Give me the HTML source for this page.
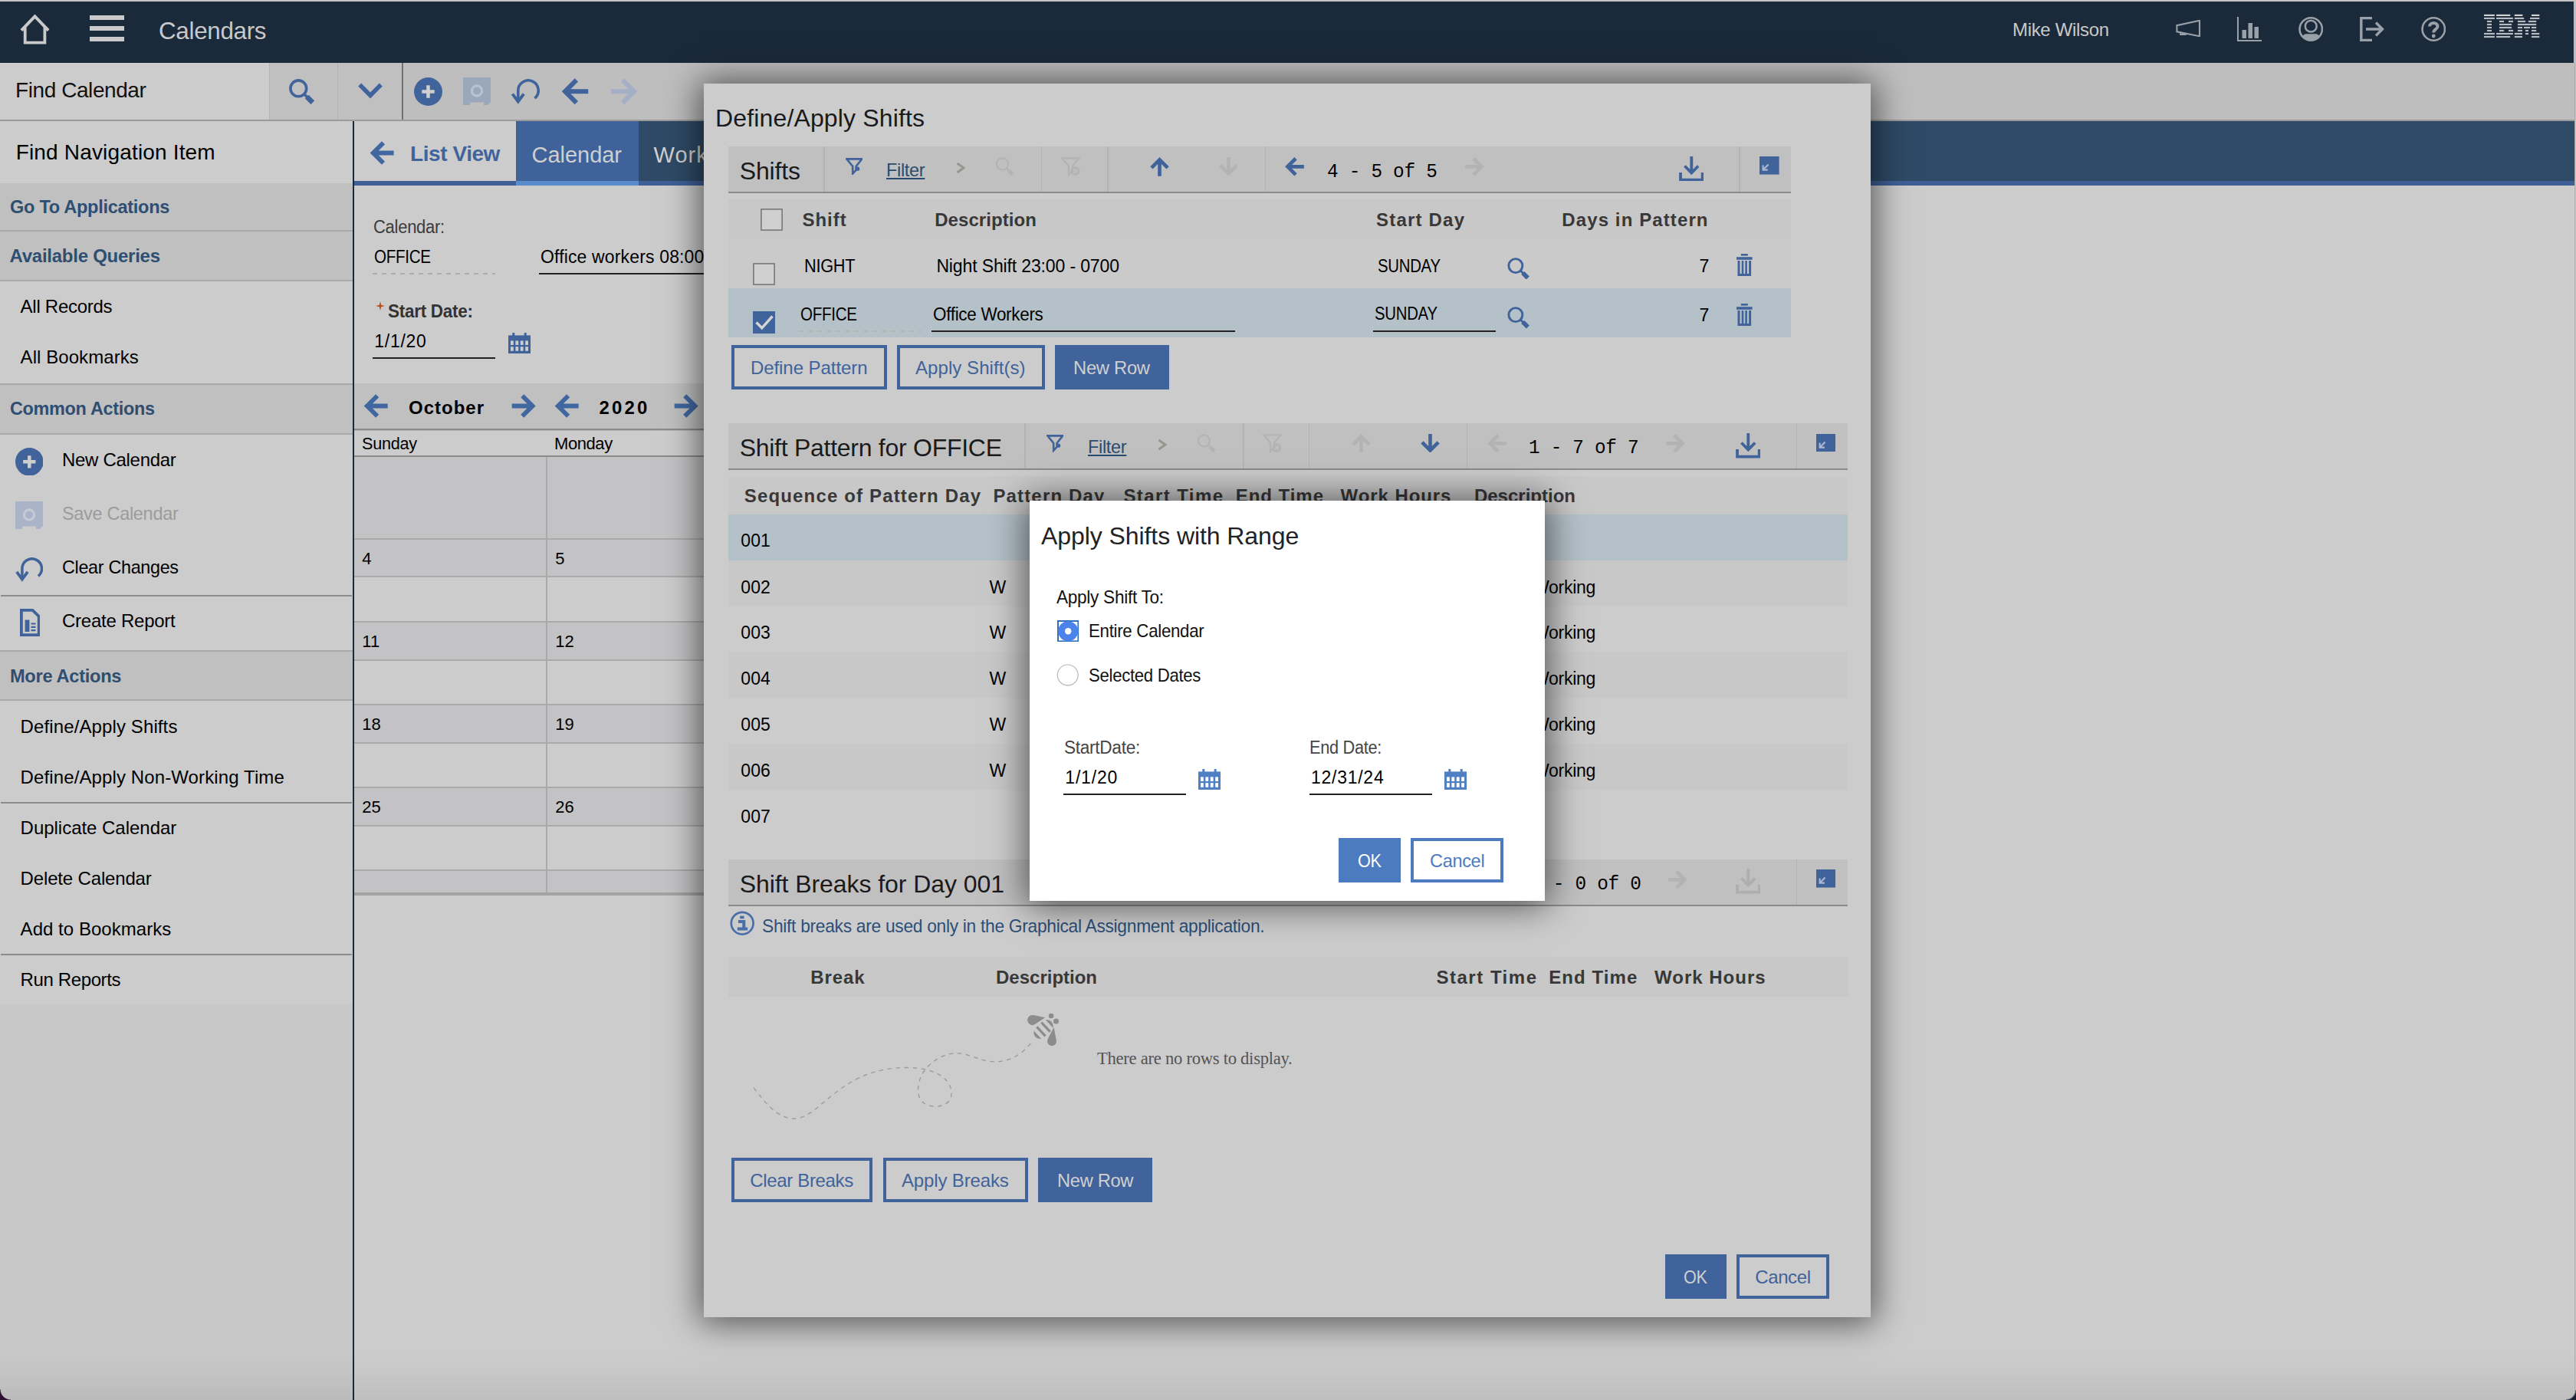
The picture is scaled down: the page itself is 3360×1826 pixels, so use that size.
<!DOCTYPE html>
<html><head><meta charset="utf-8"><title>Calendars</title><style>
html,body{margin:0;padding:0}
body{width:3360px;height:1826px;overflow:hidden;position:relative;background:#cccccc;font-family:"Liberation Sans",sans-serif}
div,span,svg{position:absolute;display:block}
span{white-space:pre}
</style></head><body>
<div style="left:0px;top:0px;width:3360px;height:2px;background:#c4c4c4;"></div>
<div style="left:0px;top:2px;width:3358px;height:80px;background:#1b2a3a;"></div>
<div style="left:3357px;top:2px;width:1px;height:1824px;background:#d4d4d4;"></div>
<div style="left:3358px;top:2px;width:2px;height:1824px;background:#c8c8c8;border-left:1px solid #a8a8a8;box-sizing:border-box"></div>
<svg style="left:25.5px;top:18px;" width="39" height="40" viewBox="0 0 39 40"><path d="M1.9 21.6 L19.5 3.4 L37.1 21.6" fill="none" stroke="#c9c9c9" stroke-width="4" stroke-linejoin="miter"/><path d="M6.7 17.5 V37.7 H32.4 V17.5" fill="none" stroke="#c9c9c9" stroke-width="3.8" stroke-linejoin="miter"/></svg>
<div style="left:117px;top:20px;width:44.5px;height:5.8px;background:#c9c9c9;"></div>
<div style="left:117px;top:34.2px;width:44.5px;height:5.8px;background:#c9c9c9;"></div>
<div style="left:117px;top:48.4px;width:44.5px;height:5.8px;background:#c9c9c9;"></div>
<span style="left:207px;top:23.91px;font-size:32px;line-height:32px;color:#c9c9c9;letter-spacing:-0.3px;transform:scaleX(0.9794);transform-origin:0 0;">Calendars</span>
<span style="left:2625px;top:26.78px;font-size:24px;line-height:24px;color:#c9c9c9;letter-spacing:-0.336px;">Mike Wilson</span>
<svg style="left:2838px;top:26px;" width="32.5" height="22" viewBox="0 0 32.5 22"><path d="M31 0.8 V21.2 L1.4 15.4 V7.2 Z" fill="none" stroke="#9aa0a8" stroke-width="2.1" stroke-linejoin="miter"/><path d="M6.2 15.5 V19 H12.6 V17" fill="none" stroke="#9aa0a8" stroke-width="2.1"/></svg>
<svg style="left:2917.5px;top:22px;" width="32.5" height="32" viewBox="0 0 32.5 32"><path d="M1 0 V31 H32.5" fill="none" stroke="#9aa0a8" stroke-width="2"/><rect x="6.5" y="17" width="5.5" height="11" fill="#9aa0a8"/><rect x="14.5" y="8" width="5.5" height="20" fill="#9aa0a8"/><rect x="22.5" y="13" width="5.5" height="15" fill="#9aa0a8"/></svg>
<svg style="left:2997.5px;top:22px;" width="32.5" height="32" viewBox="0 0 32 32"><defs><clipPath id="uc"><circle cx="16" cy="16" r="14.6"/></clipPath></defs><circle cx="16" cy="16" r="14.7" fill="none" stroke="#9aa0a8" stroke-width="2.6"/><circle cx="16" cy="12.2" r="7.4" fill="none" stroke="#9aa0a8" stroke-width="2.5"/><path d="M5 26 Q6.5 22.3 9.5 22.3 H22.5 Q25.5 22.3 27 26 V33 H5 Z" fill="#9aa0a8" clip-path="url(#uc)"/></svg>
<svg style="left:3078px;top:22px;" width="32" height="32" viewBox="0 0 32 32"><path d="M16 1.6 H1.8 V30.4 H16" fill="none" stroke="#9aa0a8" stroke-width="3.4"/><path d="M8 16 H29 M21 7.5 L29.5 16 L21 24.5" fill="none" stroke="#9aa0a8" stroke-width="3.4"/></svg>
<svg style="left:3157.5px;top:22px;" width="32.5" height="32" viewBox="0 0 32 32"><circle cx="16" cy="16" r="14.7" fill="none" stroke="#9aa0a8" stroke-width="2.6"/><path d="M10.8 12.6 C10.8 6.4 21.2 6.4 21.2 12.6 C21.2 16.4 16 16 16 20.6" fill="none" stroke="#9aa0a8" stroke-width="3.9"/><circle cx="16" cy="25" r="2.4" fill="#9aa0a8"/></svg>
<svg style="left:3230px;top:10px;" width="92" height="50" viewBox="0 0 92 50"><rect x="10.00" y="8.86" width="13.93" height="2.15" fill="#d2d2d2"/><rect x="26.07" y="8.86" width="18.21" height="2.15" fill="#d2d2d2"/><rect x="49.82" y="8.86" width="10.54" height="2.15" fill="#d2d2d2"/><rect x="71.96" y="8.86" width="10.36" height="2.15" fill="#d2d2d2"/><rect x="10.00" y="12.87" width="13.93" height="2.15" fill="#b6bbc0"/><rect x="26.07" y="12.87" width="21.79" height="2.15" fill="#b6bbc0"/><rect x="49.82" y="12.87" width="12.32" height="2.15" fill="#b6bbc0"/><rect x="70.00" y="12.87" width="12.32" height="2.15" fill="#b6bbc0"/><rect x="13.93" y="16.89" width="6.07" height="2.15" fill="#b6bbc0"/><rect x="30.00" y="16.89" width="6.07" height="2.15" fill="#b6bbc0"/><rect x="41.96" y="16.89" width="6.07" height="2.15" fill="#b6bbc0"/><rect x="53.93" y="16.89" width="10.18" height="2.15" fill="#b6bbc0"/><rect x="67.86" y="16.89" width="10.36" height="2.15" fill="#b6bbc0"/><rect x="13.93" y="20.90" width="6.07" height="2.15" fill="#b6bbc0"/><rect x="30.00" y="20.90" width="16.07" height="2.15" fill="#b6bbc0"/><rect x="53.93" y="20.90" width="24.29" height="2.15" fill="#b6bbc0"/><rect x="13.93" y="24.91" width="6.07" height="2.15" fill="#b6bbc0"/><rect x="30.00" y="24.91" width="16.07" height="2.15" fill="#b6bbc0"/><rect x="53.93" y="24.91" width="6.07" height="2.15" fill="#b6bbc0"/><rect x="61.96" y="24.91" width="8.04" height="2.15" fill="#b6bbc0"/><rect x="71.96" y="24.91" width="6.25" height="2.15" fill="#b6bbc0"/><rect x="13.93" y="28.93" width="6.07" height="2.15" fill="#b6bbc0"/><rect x="30.00" y="28.93" width="6.07" height="2.15" fill="#b6bbc0"/><rect x="41.96" y="28.93" width="6.07" height="2.15" fill="#b6bbc0"/><rect x="53.93" y="28.93" width="6.07" height="2.15" fill="#b6bbc0"/><rect x="63.93" y="28.93" width="4.11" height="2.15" fill="#b6bbc0"/><rect x="71.96" y="28.93" width="6.25" height="2.15" fill="#b6bbc0"/><rect x="10.00" y="32.94" width="13.93" height="2.15" fill="#b6bbc0"/><rect x="26.07" y="32.94" width="21.79" height="2.15" fill="#b6bbc0"/><rect x="49.82" y="32.94" width="10.18" height="2.15" fill="#b6bbc0"/><rect x="63.93" y="32.94" width="4.11" height="2.15" fill="#b6bbc0"/><rect x="71.96" y="32.94" width="10.36" height="2.15" fill="#b6bbc0"/><rect x="10.00" y="36.96" width="13.93" height="2.15" fill="#b6bbc0"/><rect x="26.07" y="36.96" width="18.04" height="2.15" fill="#b6bbc0"/><rect x="49.82" y="36.96" width="10.18" height="2.15" fill="#b6bbc0"/><rect x="71.96" y="36.96" width="10.36" height="2.15" fill="#b6bbc0"/></svg>
<div style="left:0px;top:82px;width:3358px;height:73.5px;background:#bebebe;"></div>
<div style="left:0px;top:82px;width:351px;height:73.5px;background:#cccccc;"></div>
<div style="left:351px;top:82px;width:173.5px;height:73.5px;background:#c0c0c0;border-left:1px solid #b3b3b3;box-sizing:border-box"></div>
<div style="left:440px;top:82px;width:1px;height:73.5px;background:#b3b3b3;"></div>
<div style="left:524px;top:82px;width:2px;height:73.5px;background:#707070;"></div>
<div style="left:0px;top:155.5px;width:3358px;height:2px;background:#9b9b9b;"></div>
<span style="left:20px;top:104.29px;font-size:28px;line-height:28px;color:#111;letter-spacing:-0.423px;">Find Calendar</span>
<svg style="left:376.5px;top:102.5px;" width="33" height="33" viewBox="0 0 33 33"><circle cx="12.3" cy="12.3" r="10.4" fill="none" stroke="#40639b" stroke-width="3.6"/><path d="M20 20 L24 24" stroke="#40639b" stroke-width="3.6"/><path d="M23.2 23.2 L30.8 30.8" stroke="#40639b" stroke-width="6.6"/></svg>
<svg style="left:466.5px;top:108px;" width="32" height="21" viewBox="0 0 32 21"><path d="M2.2 2.5 L16 16.5 L29.8 2.5" fill="none" stroke="#40639b" stroke-width="5.6"/></svg>
<svg style="left:539.5px;top:101px;" width="37" height="37" viewBox="0 0 36 36"><circle cx="18" cy="18" r="18" fill="#40639b"/><path d="M10 18 H26 M18 10 V26" stroke="#cfcfcf" stroke-width="4.4"/></svg>
<svg style="left:604px;top:101px;" width="36" height="36" viewBox="0 0 36 36"><path d="M0 0 H36 V32 L32 36 H27 V32.5 H9 V36 H0 Z" fill="#9ba8bc"/><circle cx="18" cy="17.5" r="6.6" fill="none" stroke="#b9c2cf" stroke-width="3.2"/></svg>
<svg style="left:667px;top:103px;" width="37" height="33" viewBox="0 0 37 33"><path d="M8.8 27 V15 A13.2 13.2 0 1 1 30.5 25.2" fill="none" stroke="#40639b" stroke-width="3.6"/><path d="M1.5 19.5 L8.8 29.5 L16.2 19.5" fill="none" stroke="#40639b" stroke-width="3.8"/></svg>
<svg style="left:732px;top:102px;" width="36" height="34.5" viewBox="0 0 34 34"><g transform="rotate(0 17 17)"><path d="M34 17 H5.24 M18.84 2.4 L4.24 17 L18.84 31.6" fill="none" stroke="#40639b" stroke-width="6" stroke-linejoin="miter"/></g></svg>
<svg style="left:796px;top:102px;" width="36" height="34.5" viewBox="0 0 34 34"><g transform="rotate(180 17 17)"><path d="M34 17 H5.24 M18.84 2.4 L4.24 17 L18.84 31.6" fill="none" stroke="#a5b0c6" stroke-width="6" stroke-linejoin="miter"/></g></svg>
<div style="left:0px;top:157.5px;width:460px;height:1152px;background:#cccccc;"></div>
<div style="left:0px;top:1309.5px;width:460px;height:517px;background:#c8c8c8;"></div>
<span style="left:20.7px;top:184.79px;font-size:28px;line-height:28px;color:#000;letter-spacing:0.169px;">Find Navigation Item</span>
<div style="left:0px;top:236.5px;width:460px;height:65.5px;background:#c0c0c0;border-top:2px solid #a9a9a9;border-bottom:2px solid #a9a9a9;box-sizing:border-box"></div>
<span style="left:12.6px;top:258.18px;font-size:24px;line-height:24px;color:#2e4e72;font-weight:700;letter-spacing:-0.3px;transform:scaleX(0.9820);transform-origin:0 0;">Go To Applications</span>
<div style="left:0px;top:300px;width:460px;height:67px;background:#c0c0c0;border-top:2px solid #a9a9a9;border-bottom:2px solid #a9a9a9;box-sizing:border-box"></div>
<span style="left:12.6px;top:321.68px;font-size:24px;line-height:24px;color:#2e4e72;font-weight:700;letter-spacing:-0.259px;">Available Queries</span>
<div style="left:0px;top:499.5px;width:460px;height:67px;background:#c0c0c0;border-top:2px solid #a9a9a9;border-bottom:2px solid #a9a9a9;box-sizing:border-box"></div>
<span style="left:12.6px;top:521.18px;font-size:24px;line-height:24px;color:#2e4e72;font-weight:700;letter-spacing:-0.3px;transform:scaleX(0.9748);transform-origin:0 0;">Common Actions</span>
<div style="left:0px;top:848px;width:460px;height:66px;background:#c0c0c0;border-top:2px solid #a9a9a9;border-bottom:2px solid #a9a9a9;box-sizing:border-box"></div>
<span style="left:12.6px;top:869.68px;font-size:24px;line-height:24px;color:#2e4e72;font-weight:700;letter-spacing:-0.3px;transform:scaleX(0.9836);transform-origin:0 0;">More Actions</span>
<div style="left:0px;top:236.5px;width:460px;height:2px;background:#cccccc;"></div>
<span style="left:26.6px;top:387.78px;font-size:24px;line-height:24px;color:#000;letter-spacing:-0.272px;">All Records</span>
<span style="left:26.6px;top:454.18px;font-size:24px;line-height:24px;color:#000;letter-spacing:0.069px;">All Bookmarks</span>
<span style="left:26.6px;top:935.68px;font-size:24px;line-height:24px;color:#000;letter-spacing:0.112px;">Define/Apply Shifts</span>
<span style="left:26.6px;top:1002.18px;font-size:24px;line-height:24px;color:#000;letter-spacing:0.113px;">Define/Apply Non-Working Time</span>
<span style="left:26.6px;top:1068.18px;font-size:24px;line-height:24px;color:#000;letter-spacing:-0.025px;">Duplicate Calendar</span>
<span style="left:26.6px;top:1133.58px;font-size:24px;line-height:24px;color:#000;letter-spacing:-0.160px;">Delete Calendar</span>
<span style="left:26.6px;top:1199.98px;font-size:24px;line-height:24px;color:#000;letter-spacing:0.040px;">Add to Bookmarks</span>
<span style="left:26.6px;top:1265.78px;font-size:24px;line-height:24px;color:#000;letter-spacing:-0.383px;">Run Reports</span>
<span style="left:81px;top:588.18px;font-size:24px;line-height:24px;color:#000;letter-spacing:-0.298px;">New Calendar</span>
<span style="left:81px;top:657.78px;font-size:24px;line-height:24px;color:#9c9c9c;letter-spacing:-0.3px;transform:scaleX(0.9777);transform-origin:0 0;">Save Calendar</span>
<span style="left:81px;top:727.58px;font-size:24px;line-height:24px;color:#000;letter-spacing:-0.3px;transform:scaleX(0.9713);transform-origin:0 0;">Clear Changes</span>
<span style="left:81px;top:797.68px;font-size:24px;line-height:24px;color:#000;letter-spacing:-0.246px;">Create Report</span>
<div style="left:1px;top:776px;width:458px;height:2px;background:#8c8c8c;"></div>
<div style="left:1px;top:1045.7px;width:458px;height:2px;background:#8c8c8c;"></div>
<div style="left:1px;top:1243.6px;width:458px;height:2px;background:#8c8c8c;"></div>
<svg style="left:19.6px;top:583.5px;" width="36.6" height="36.6" viewBox="0 0 36 36"><circle cx="18" cy="18" r="18" fill="#40639b"/><path d="M10 18 H26 M18 10 V26" stroke="#cfcfcf" stroke-width="4.4"/></svg>
<svg style="left:20px;top:654px;" width="36" height="36" viewBox="0 0 36 36"><path d="M0 0 H36 V32 L32 36 H27 V32.5 H9 V36 H0 Z" fill="#a9b4c8"/><circle cx="18" cy="17.5" r="6.6" fill="none" stroke="#c4cad4" stroke-width="3.2"/></svg>
<svg style="left:19.6px;top:726.5px;" width="36.6" height="32" viewBox="0 0 37 33"><path d="M8.8 27 V15 A13.2 13.2 0 1 1 30.5 25.2" fill="none" stroke="#40639b" stroke-width="3.6"/><path d="M1.5 19.5 L8.8 29.5 L16.2 19.5" fill="none" stroke="#40639b" stroke-width="3.8"/></svg>
<svg style="left:25.7px;top:794px;" width="26.6" height="36" viewBox="0 0 26.6 36"><path d="M1.9 1.9 H16.5 L24.7 10 V34.1 H1.9 Z" fill="none" stroke="#40639b" stroke-width="3.8"/><path d="M15 0 L26.6 11.6 V0 Z" fill="#40639b" opacity="0"/><rect x="6.6" y="14.5" width="5.8" height="15.5" fill="#40639b"/><path d="M14.5 19.5 H20.5 M14.5 23.8 H20.5 M14.5 28.1 H20.5" stroke="#40639b" stroke-width="2.2"/></svg>
<div style="left:460px;top:157.5px;width:2px;height:1670px;background:#1b2a3a;"></div>
<div style="left:462px;top:157.5px;width:2896px;height:78.5px;background:#2f4a66;"></div>
<div style="left:462px;top:236px;width:2896px;height:6px;background:#3f6097;"></div>
<div style="left:462px;top:157.5px;width:211px;height:78.5px;background:#cccccc;"></div>
<div style="left:673px;top:157.5px;width:160px;height:78.5px;background:#40629a;"></div>
<div style="left:673px;top:236px;width:160px;height:6px;background:#5a8ccb;"></div>
<svg style="left:481.8px;top:184.4px;" width="32.2" height="31" viewBox="0 0 34 34"><g transform="rotate(0 17 17)"><path d="M34 17 H5.53 M19.13 2.4 L4.53 17 L19.13 31.6" fill="none" stroke="#4167a0" stroke-width="6.4" stroke-linejoin="miter"/></g></svg>
<span style="left:535px;top:186.79px;font-size:28px;line-height:28px;color:#3f649d;font-weight:700;letter-spacing:-0.432px;">List View</span>
<span style="left:693.5px;top:188.45px;font-size:29px;line-height:29px;color:#cfcfcf;letter-spacing:-0.027px;">Calendar</span>
<span style="left:852.6px;top:188.45px;font-size:29px;line-height:29px;color:#cfcfcf;letter-spacing:1.000px;">Work Periods</span>
<span style="left:486.6px;top:284.63px;font-size:23px;line-height:23px;color:#3c3c3c;letter-spacing:-0.3px;transform:scaleX(0.9575);transform-origin:0 0;">Calendar:</span>
<span style="left:488.3px;top:323.83px;font-size:23px;line-height:23px;color:#000;letter-spacing:-0.3px;transform:scaleX(0.8945);transform-origin:0 0;">OFFICE</span>
<div style="left:486px;top:356px;width:160px;height:2px;background:transparent;background:repeating-linear-gradient(90deg,#adadad 0 6px,transparent 6px 12px)"></div>
<span style="left:705px;top:323.83px;font-size:23px;line-height:23px;color:#000;letter-spacing:0.150px;">Office workers 08:00 - 17:00</span>
<div style="left:703px;top:356px;width:500px;height:2px;background:#222;"></div>
<svg style="left:489.5px;top:392.5px;" width="12" height="12" viewBox="0 0 12 12"><path d="M6 0 L7.2 4.8 L12 6 L7.2 7.2 L6 12 L4.8 7.2 L0 6 L4.8 4.8 Z" fill="#b5501e"/></svg>
<span style="left:505.8px;top:394.63px;font-size:23px;line-height:23px;color:#333;font-weight:700;letter-spacing:-0.3px;transform:scaleX(0.9796);transform-origin:0 0;">Start Date:</span>
<span style="left:488.3px;top:434.03px;font-size:23px;line-height:23px;color:#000;letter-spacing:0.729px;">1/1/20</span>
<div style="left:486px;top:465.5px;width:160px;height:2px;background:#222;"></div>
<svg style="left:662.6px;top:433.5px;" width="29" height="27" viewBox="0 0 29 27"><rect x="0" y="3.4" width="29" height="23.6" fill="#40639b"/><rect x="5.3" y="0" width="3" height="6" fill="#40639b"/><rect x="20.7" y="0" width="3" height="6" fill="#40639b"/><rect x="3.0" y="10.4" width="3.8" height="5.6" fill="#cccccc"/><rect x="3.0" y="18.2" width="3.8" height="5.6" fill="#cccccc"/><rect x="9.4" y="10.4" width="3.8" height="5.6" fill="#cccccc"/><rect x="9.4" y="18.2" width="3.8" height="5.6" fill="#cccccc"/><rect x="15.8" y="10.4" width="3.8" height="5.6" fill="#cccccc"/><rect x="15.8" y="18.2" width="3.8" height="5.6" fill="#cccccc"/><rect x="22.2" y="10.4" width="3.8" height="5.6" fill="#cccccc"/><rect x="22.2" y="18.2" width="3.8" height="5.6" fill="#cccccc"/></svg>
<div style="left:462px;top:500px;width:1900px;height:58.5px;background:#c0c0c0;"></div>
<div style="left:462px;top:558.5px;width:1900px;height:3.5px;background:#8a8a8a;border-bottom:1px solid #b5b5b5;box-sizing:border-box"></div>
<svg style="left:474px;top:513.7px;" width="32.4" height="31" viewBox="0 0 34 34"><g transform="rotate(0 17 17)"><path d="M34 17 H5.53 M19.13 2.4 L4.53 17 L19.13 31.6" fill="none" stroke="#4167a0" stroke-width="6.4" stroke-linejoin="miter"/></g></svg>
<span style="left:533px;top:519.58px;font-size:24px;line-height:24px;color:#000;font-weight:700;letter-spacing:0.997px;">October</span>
<svg style="left:667px;top:513.7px;" width="32.4" height="31" viewBox="0 0 34 34"><g transform="rotate(180 17 17)"><path d="M34 17 H5.53 M19.13 2.4 L4.53 17 L19.13 31.6" fill="none" stroke="#4167a0" stroke-width="6.4" stroke-linejoin="miter"/></g></svg>
<svg style="left:723px;top:513.7px;" width="32.4" height="31" viewBox="0 0 34 34"><g transform="rotate(0 17 17)"><path d="M34 17 H5.53 M19.13 2.4 L4.53 17 L19.13 31.6" fill="none" stroke="#4167a0" stroke-width="6.4" stroke-linejoin="miter"/></g></svg>
<span style="left:781.4px;top:519.58px;font-size:24px;line-height:24px;color:#000;font-weight:700;letter-spacing:3.203px;">2020</span>
<svg style="left:879.4px;top:513.7px;" width="32.4" height="31" viewBox="0 0 34 34"><g transform="rotate(180 17 17)"><path d="M34 17 H5.53 M19.13 2.4 L4.53 17 L19.13 31.6" fill="none" stroke="#4167a0" stroke-width="6.4" stroke-linejoin="miter"/></g></svg>
<div style="left:462px;top:562px;width:1900px;height:32px;background:#cccccc;"></div>
<div style="left:462px;top:593.5px;width:1900px;height:2px;background:#8a8a8a;"></div>
<span style="left:472.4px;top:567.87px;font-size:22px;line-height:22px;color:#000;letter-spacing:-0.3px;transform:scaleX(0.9846);transform-origin:0 0;">Sunday</span>
<span style="left:723px;top:567.87px;font-size:22px;line-height:22px;color:#000;letter-spacing:-0.416px;">Monday</span>
<div style="left:462px;top:595.5px;width:1000px;height:107.5px;background:#c3c3c5;"></div>
<div style="left:462px;top:703px;width:1000px;height:49.4px;background:#c3c3c5;"></div>
<div style="left:462px;top:702px;width:1000px;height:2px;background:#aaaaaa;"></div>
<span style="left:472.3px;top:718.07px;font-size:22px;line-height:22px;color:#000;">4</span>
<span style="left:724.3px;top:718.07px;font-size:22px;line-height:22px;color:#000;">5</span>
<div style="left:462px;top:752.4px;width:1000px;height:58.1px;background:#cccccc;"></div>
<div style="left:462px;top:751.4px;width:1000px;height:2px;background:#aaaaaa;"></div>
<div style="left:462px;top:810.5px;width:1000px;height:50.5px;background:#c3c3c5;"></div>
<div style="left:462px;top:809.5px;width:1000px;height:2px;background:#aaaaaa;"></div>
<span style="left:472.3px;top:825.57px;font-size:22px;line-height:22px;color:#000;">11</span>
<span style="left:724.3px;top:825.57px;font-size:22px;line-height:22px;color:#000;">12</span>
<div style="left:462px;top:861px;width:1000px;height:58px;background:#cccccc;"></div>
<div style="left:462px;top:860px;width:1000px;height:2px;background:#aaaaaa;"></div>
<div style="left:462px;top:919px;width:1000px;height:50px;background:#c3c3c5;"></div>
<div style="left:462px;top:918px;width:1000px;height:2px;background:#aaaaaa;"></div>
<span style="left:472.3px;top:934.07px;font-size:22px;line-height:22px;color:#000;">18</span>
<span style="left:724.3px;top:934.07px;font-size:22px;line-height:22px;color:#000;">19</span>
<div style="left:462px;top:969px;width:1000px;height:58px;background:#cccccc;"></div>
<div style="left:462px;top:968px;width:1000px;height:2px;background:#aaaaaa;"></div>
<div style="left:462px;top:1027px;width:1000px;height:50px;background:#c3c3c5;"></div>
<div style="left:462px;top:1026px;width:1000px;height:2px;background:#aaaaaa;"></div>
<span style="left:472.3px;top:1042.07px;font-size:22px;line-height:22px;color:#000;">25</span>
<span style="left:724.3px;top:1042.07px;font-size:22px;line-height:22px;color:#000;">26</span>
<div style="left:462px;top:1077px;width:1000px;height:57.5px;background:#cccccc;"></div>
<div style="left:462px;top:1076px;width:1000px;height:2px;background:#aaaaaa;"></div>
<div style="left:462px;top:1134.5px;width:1000px;height:29.5px;background:#c3c3c5;"></div>
<div style="left:462px;top:1133.5px;width:1000px;height:2px;background:#aaaaaa;"></div>
<div style="left:712px;top:595.5px;width:2px;height:568.5px;background:#aaaaaa;"></div>
<div style="left:462px;top:1164px;width:1000px;height:4px;background:#a3a3a3;"></div>
<div style="left:918px;top:108.7px;width:1522px;height:1609px;background:#cccccc;box-shadow:0 2px 42px 5px rgba(0,0,0,0.6)"></div>
<span style="left:933px;top:138.41px;font-size:32px;line-height:32px;color:#1a1a1a;letter-spacing:0.147px;">Define/Apply Shifts</span>
<div style="left:950px;top:191px;width:1386px;height:58.5px;background:#c0c0c0;"></div>
<div style="left:950px;top:249.5px;width:1386px;height:2px;background:#8b8b8b;"></div>
<span style="left:964.7px;top:206.71px;font-size:32px;line-height:32px;color:#1a1a1a;letter-spacing:-0.146px;">Shifts</span>
<div style="left:1074px;top:191px;width:1.6px;height:58.5px;background:#b3b3b3;"></div>
<div style="left:1357.5px;top:191px;width:1.6px;height:58.5px;background:#b3b3b3;"></div>
<div style="left:1444px;top:191px;width:1.6px;height:58.5px;background:#b3b3b3;"></div>
<div style="left:1649.5px;top:191px;width:1.6px;height:58.5px;background:#b3b3b3;"></div>
<div style="left:2268px;top:191px;width:1.6px;height:58.5px;background:#b3b3b3;"></div>
<svg style="left:1102.6px;top:205.6px;" width="22.5" height="22.5" viewBox="0 0 22.5 22.5"><path d="M1.3 1.4 H21.3 L13.6 11 V15.8 L9.2 20.6 V11 Z" fill="none" stroke="#40639b" stroke-width="2.6" stroke-linejoin="miter"/><circle cx="15.6" cy="14.2" r="2.6" fill="#40639b"/></svg>
<span style="left:1156.4px;top:210.08px;font-size:24px;line-height:24px;color:#2b4b6f;letter-spacing:-0.3px;transform:scaleX(0.9760);transform-origin:0 0;text-decoration:underline;text-decoration-thickness:1.7px;text-underline-offset:1.5px">Filter</span>
<svg style="left:1247px;top:212px;" width="12" height="14" viewBox="0 0 12 14"><path d="M1.5 1 L10 7 L1.5 13" fill="none" stroke="#97978f" stroke-width="3"/></svg>
<svg style="left:1298px;top:205px;" width="25" height="24" viewBox="0 0 33 33"><circle cx="12.3" cy="12.3" r="10.4" fill="none" stroke="#b3b3b3" stroke-width="3"/><path d="M20 20 L24 24" stroke="#b3b3b3" stroke-width="3"/><path d="M23.2 23.2 L30.8 30.8" stroke="#b3b3b3" stroke-width="6.6"/></svg>
<svg style="left:1384px;top:205px;" width="25.5" height="24.5" viewBox="0 0 25.5 24.5"><path d="M1.3 1.4 H23.5 L15 11.5 V17 L10 23 V11.5 Z" fill="none" stroke="#b3b3b3" stroke-width="2.2" stroke-linejoin="miter"/><circle cx="18.5" cy="18" r="6" fill="#b3b3b3"/><path d="M16 15.5 L21 20.5 M21 15.5 L16 20.5" stroke="#c0c0c0" stroke-width="1.6"/></svg>
<svg style="left:1500.3px;top:205px;" width="25" height="24.7" viewBox="0 0 34 34"><g transform="rotate(90 17 17)"><path d="M34 17 H5.53 M19.13 2.4 L4.53 17 L19.13 31.6" fill="none" stroke="#40639b" stroke-width="6.4" stroke-linejoin="miter"/></g></svg>
<svg style="left:1590.3px;top:205px;" width="25" height="24.7" viewBox="0 0 34 34"><g transform="rotate(270 17 17)"><path d="M34 17 H5.53 M19.13 2.4 L4.53 17 L19.13 31.6" fill="none" stroke="#b3b3b3" stroke-width="6.4" stroke-linejoin="miter"/></g></svg>
<svg style="left:1676.4px;top:205px;" width="25" height="24.7" viewBox="0 0 34 34"><g transform="rotate(0 17 17)"><path d="M34 17 H5.53 M19.13 2.4 L4.53 17 L19.13 31.6" fill="none" stroke="#40639b" stroke-width="6.4" stroke-linejoin="miter"/></g></svg>
<span style="left:1730.8px;top:210.58px;font-size:26px;line-height:26px;color:#000;font-family:'Liberation Mono', monospace;letter-spacing:-0.3px;transform:scaleX(0.9378);transform-origin:0 0;">4 - 5 of 5</span>
<svg style="left:1910.6px;top:205px;" width="25" height="24.7" viewBox="0 0 34 34"><g transform="rotate(180 17 17)"><path d="M34 17 H5.53 M19.13 2.4 L4.53 17 L19.13 31.6" fill="none" stroke="#b3b3b3" stroke-width="6.4" stroke-linejoin="miter"/></g></svg>
<svg style="left:2189.8px;top:203.5px;" width="32.7" height="32.7" viewBox="0 0 32.5 32.5"><path d="M2 21 V30.5 H30.5 V21" fill="none" stroke="#40639b" stroke-width="3.8"/><path d="M16.2 0 V21 M7.4 12.4 L16.2 21.4 L25 12.4" fill="none" stroke="#40639b" stroke-width="3.8"/></svg>
<svg style="left:2295px;top:204.4px;" width="25.6" height="23.6" viewBox="0 0 25.6 23.6"><rect width="25.6" height="23.6" fill="#40639b"/><path d="M11.6 10.6 L5.4 16.8 M4.6 11.4 V17.6 H10.8" fill="none" stroke="#a9b8d0" stroke-width="2.2"/></svg>
<div style="left:950px;top:260px;width:1386px;height:52px;background:#c8c8c8;"></div>
<div style="left:950px;top:312px;width:1386px;height:64px;background:#cacaca;"></div>
<div style="left:950px;top:376px;width:1386px;height:63.7px;background:#b4c1c8;"></div>
<svg style="left:991.5px;top:271.5px;" width="29" height="29" viewBox="0 0 29 29"><rect x="0.9" y="0.9" width="27.2" height="27.2" fill="#d0d0d0" stroke="#727272" stroke-width="1.5"/></svg>
<svg style="left:981.7px;top:342.5px;" width="29" height="29" viewBox="0 0 29 29"><rect x="0.9" y="0.9" width="27.2" height="27.2" fill="#d0d0d0" stroke="#727272" stroke-width="1.5"/></svg>
<svg style="left:981.7px;top:406.3px;" width="29" height="29" viewBox="0 0 29 29"><rect width="29" height="29" fill="#40639b"/><path d="M4.5 14.5 L11.8 21.8 L25.5 6.5" fill="none" stroke="#d4d4d4" stroke-width="3.4"/></svg>
<span style="left:1046.4px;top:275.18px;font-size:24px;line-height:24px;color:#383838;font-weight:700;letter-spacing:0.993px;">Shift</span>
<span style="left:1219.2px;top:275.18px;font-size:24px;line-height:24px;color:#383838;font-weight:700;letter-spacing:0.077px;">Description</span>
<span style="left:1795px;top:275.18px;font-size:24px;line-height:24px;color:#383838;font-weight:700;letter-spacing:1.203px;">Start Day</span>
<span style="left:2037.3px;top:275.18px;font-size:24px;line-height:24px;color:#383838;font-weight:700;letter-spacing:1.105px;">Days in Pattern</span>
<span style="left:1048.8px;top:335.73px;font-size:23px;line-height:23px;color:#000;letter-spacing:-0.3px;transform:scaleX(0.9451);transform-origin:0 0;">NIGHT</span>
<span style="left:1221.4px;top:335.73px;font-size:23px;line-height:23px;color:#000;letter-spacing:-0.134px;">Night Shift 23:00 - 0700</span>
<span style="left:1796.9px;top:335.53px;font-size:23px;line-height:23px;color:#000;letter-spacing:-0.3px;transform:scaleX(0.8850);transform-origin:0 0;">SUNDAY</span>
<svg style="left:1966px;top:335.8px;" width="29" height="28.5" viewBox="0 0 33 33"><circle cx="12.3" cy="12.3" r="10.4" fill="none" stroke="#40639b" stroke-width="3.4"/><path d="M20 20 L24 24" stroke="#40639b" stroke-width="3.4"/><path d="M23.2 23.2 L30.8 30.8" stroke="#40639b" stroke-width="6.6"/></svg>
<span style="left:2216.6px;top:336.03px;font-size:23px;line-height:23px;color:#000;">7</span>
<svg style="left:2265.4px;top:331.4px;" width="20.6" height="29" viewBox="0 0 20.6 29"><rect x="5.8" y="0" width="9" height="2.6" fill="#40639b"/><rect x="0" y="4.2" width="20.6" height="3.6" fill="#40639b"/><path d="M3 9 V27.4 H17.6 V9" fill="none" stroke="#40639b" stroke-width="3"/><path d="M8 9 V27 M12.6 9 V27" stroke="#40639b" stroke-width="2.6"/></svg>
<span style="left:1044.4px;top:398.53px;font-size:23px;line-height:23px;color:#000;letter-spacing:-0.3px;transform:scaleX(0.8945);transform-origin:0 0;">OFFICE</span>
<div style="left:1042px;top:431px;width:160px;height:2px;background:transparent;background:repeating-linear-gradient(90deg,#b4b4b0 0 6px,transparent 6px 12px)"></div>
<span style="left:1217px;top:398.53px;font-size:23px;line-height:23px;color:#000;letter-spacing:-0.3px;transform:scaleX(0.9759);transform-origin:0 0;">Office Workers</span>
<div style="left:1214.8px;top:430.8px;width:396.2px;height:2.6px;background:#222;"></div>
<span style="left:1793px;top:397.83px;font-size:23px;line-height:23px;color:#000;letter-spacing:-0.3px;transform:scaleX(0.8850);transform-origin:0 0;">SUNDAY</span>
<div style="left:1791px;top:430.8px;width:160px;height:2.6px;background:#222;"></div>
<svg style="left:1966px;top:400px;" width="29" height="28.5" viewBox="0 0 33 33"><circle cx="12.3" cy="12.3" r="10.4" fill="none" stroke="#40639b" stroke-width="3.4"/><path d="M20 20 L24 24" stroke="#40639b" stroke-width="3.4"/><path d="M23.2 23.2 L30.8 30.8" stroke="#40639b" stroke-width="6.6"/></svg>
<span style="left:2216.6px;top:400.03px;font-size:23px;line-height:23px;color:#000;">7</span>
<svg style="left:2265.4px;top:395.6px;" width="20.6" height="29" viewBox="0 0 20.6 29"><rect x="5.8" y="0" width="9" height="2.6" fill="#40639b"/><rect x="0" y="4.2" width="20.6" height="3.6" fill="#40639b"/><path d="M3 9 V27.4 H17.6 V9" fill="none" stroke="#40639b" stroke-width="3"/><path d="M8 9 V27 M12.6 9 V27" stroke="#40639b" stroke-width="2.6"/></svg>
<div style="left:954px;top:450.2px;width:203px;height:57.8px;background:transparent;border:4px solid #40639b;box-sizing:border-box"></div>
<span style="left:978.9px;top:467.78px;font-size:24px;line-height:24px;color:#40639b;letter-spacing:-0.056px;">Define Pattern</span>
<div style="left:1170px;top:450.2px;width:193px;height:57.8px;background:transparent;border:4px solid #40639b;box-sizing:border-box"></div>
<span style="left:1194px;top:467.78px;font-size:24px;line-height:24px;color:#40639b;letter-spacing:0.060px;">Apply Shift(s)</span>
<div style="left:1376px;top:450.2px;width:149px;height:57.8px;background:#40639b;"></div>
<span style="left:1400px;top:467.78px;font-size:24px;line-height:24px;color:#d0d0d0;letter-spacing:-0.3px;transform:scaleX(0.9910);transform-origin:0 0;">New Row</span>
<div style="left:950px;top:552px;width:1460px;height:58.5px;background:#c0c0c0;"></div>
<div style="left:950px;top:610.5px;width:1460px;height:2px;background:#8b8b8b;"></div>
<span style="left:964.7px;top:567.71px;font-size:32px;line-height:32px;color:#1a1a1a;letter-spacing:-0.272px;">Shift Pattern for OFFICE</span>
<div style="left:1336px;top:552px;width:1.6px;height:58.5px;background:#b3b3b3;"></div>
<div style="left:1621px;top:552px;width:1.6px;height:58.5px;background:#b3b3b3;"></div>
<div style="left:1706.5px;top:552px;width:1.6px;height:58.5px;background:#b3b3b3;"></div>
<div style="left:1912.6px;top:552px;width:1.6px;height:58.5px;background:#b3b3b3;"></div>
<div style="left:2342.5px;top:552px;width:1.6px;height:58.5px;background:#b3b3b3;"></div>
<svg style="left:1364.7px;top:567px;" width="22.5" height="22.5" viewBox="0 0 22.5 22.5"><path d="M1.3 1.4 H21.3 L13.6 11 V15.8 L9.2 20.6 V11 Z" fill="none" stroke="#40639b" stroke-width="2.6" stroke-linejoin="miter"/><circle cx="15.6" cy="14.2" r="2.6" fill="#40639b"/></svg>
<span style="left:1418.5px;top:571.18px;font-size:24px;line-height:24px;color:#2b4b6f;letter-spacing:-0.3px;transform:scaleX(0.9760);transform-origin:0 0;text-decoration:underline;text-decoration-thickness:1.7px;text-underline-offset:1.5px">Filter</span>
<svg style="left:1510px;top:573px;" width="12" height="14" viewBox="0 0 12 14"><path d="M1.5 1 L10 7 L1.5 13" fill="none" stroke="#97978f" stroke-width="3"/></svg>
<svg style="left:1561px;top:566px;" width="25" height="24" viewBox="0 0 33 33"><circle cx="12.3" cy="12.3" r="10.4" fill="none" stroke="#b3b3b3" stroke-width="3"/><path d="M20 20 L24 24" stroke="#b3b3b3" stroke-width="3"/><path d="M23.2 23.2 L30.8 30.8" stroke="#b3b3b3" stroke-width="6.6"/></svg>
<svg style="left:1647px;top:566px;" width="25.5" height="24.5" viewBox="0 0 25.5 24.5"><path d="M1.3 1.4 H23.5 L15 11.5 V17 L10 23 V11.5 Z" fill="none" stroke="#b3b3b3" stroke-width="2.2" stroke-linejoin="miter"/><circle cx="18.5" cy="18" r="6" fill="#b3b3b3"/><path d="M16 15.5 L21 20.5 M21 15.5 L16 20.5" stroke="#c0c0c0" stroke-width="1.6"/></svg>
<svg style="left:1763.2px;top:565.7px;" width="25" height="24.7" viewBox="0 0 34 34"><g transform="rotate(90 17 17)"><path d="M34 17 H5.53 M19.13 2.4 L4.53 17 L19.13 31.6" fill="none" stroke="#b3b3b3" stroke-width="6.4" stroke-linejoin="miter"/></g></svg>
<svg style="left:1853px;top:565.7px;" width="25" height="24.7" viewBox="0 0 34 34"><g transform="rotate(270 17 17)"><path d="M34 17 H5.53 M19.13 2.4 L4.53 17 L19.13 31.6" fill="none" stroke="#40639b" stroke-width="6.4" stroke-linejoin="miter"/></g></svg>
<svg style="left:1939.5px;top:565.7px;" width="25" height="24.7" viewBox="0 0 34 34"><g transform="rotate(0 17 17)"><path d="M34 17 H5.53 M19.13 2.4 L4.53 17 L19.13 31.6" fill="none" stroke="#b3b3b3" stroke-width="6.4" stroke-linejoin="miter"/></g></svg>
<span style="left:1994px;top:571.08px;font-size:26px;line-height:26px;color:#000;font-family:'Liberation Mono', monospace;letter-spacing:-0.3px;transform:scaleX(0.9359);transform-origin:0 0;">1 - 7 of 7</span>
<svg style="left:2173.4px;top:565.7px;" width="25" height="24.7" viewBox="0 0 34 34"><g transform="rotate(180 17 17)"><path d="M34 17 H5.53 M19.13 2.4 L4.53 17 L19.13 31.6" fill="none" stroke="#b3b3b3" stroke-width="6.4" stroke-linejoin="miter"/></g></svg>
<svg style="left:2263.8px;top:565px;" width="32.7" height="32.7" viewBox="0 0 32.5 32.5"><path d="M2 21 V30.5 H30.5 V21" fill="none" stroke="#40639b" stroke-width="3.8"/><path d="M16.2 0 V21 M7.4 12.4 L16.2 21.4 L25 12.4" fill="none" stroke="#40639b" stroke-width="3.8"/></svg>
<svg style="left:2368.8px;top:565.7px;" width="25.6" height="23.6" viewBox="0 0 25.6 23.6"><rect width="25.6" height="23.6" fill="#40639b"/><path d="M11.6 10.6 L5.4 16.8 M4.6 11.4 V17.6 H10.8" fill="none" stroke="#a9b8d0" stroke-width="2.2"/></svg>
<div style="left:950px;top:621px;width:1460px;height:49.7px;background:#c8c8c8;"></div>
<span style="left:970.8px;top:635.18px;font-size:24px;line-height:24px;color:#383838;font-weight:700;letter-spacing:1.157px;">Sequence of Pattern Day</span>
<span style="left:1295.4px;top:635.18px;font-size:24px;line-height:24px;color:#383838;font-weight:700;letter-spacing:1.161px;">Pattern Day</span>
<span style="left:1465.4px;top:635.18px;font-size:24px;line-height:24px;color:#383838;font-weight:700;letter-spacing:1.407px;">Start Time</span>
<span style="left:1611.8px;top:635.18px;font-size:24px;line-height:24px;color:#383838;font-weight:700;letter-spacing:0.946px;">End Time</span>
<span style="left:1748.6px;top:635.18px;font-size:24px;line-height:24px;color:#383838;font-weight:700;letter-spacing:0.914px;">Work Hours</span>
<span style="left:1922.9px;top:635.18px;font-size:24px;line-height:24px;color:#383838;font-weight:700;letter-spacing:0.007px;">Description</span>
<div style="left:950px;top:670.7px;width:1460px;height:60.3px;background:#b4c1c8;"></div>
<span style="left:966.3px;top:694.43px;font-size:23px;line-height:23px;color:#000;letter-spacing:0.113px;">001</span>
<div style="left:950px;top:731px;width:1460px;height:59.7px;background:#c8c8c8;"></div>
<span style="left:966.3px;top:754.73px;font-size:23px;line-height:23px;color:#000;letter-spacing:0.113px;">002</span>
<span style="left:1290.5px;top:754.73px;font-size:23px;line-height:23px;color:#000;">W</span>
<span style="left:1999px;top:754.73px;font-size:23px;line-height:23px;color:#000;letter-spacing:-0.273px;">Working</span>
<div style="left:950px;top:790.7px;width:1460px;height:60px;background:#cccccc;"></div>
<span style="left:966.3px;top:814.43px;font-size:23px;line-height:23px;color:#000;letter-spacing:0.113px;">003</span>
<span style="left:1290.5px;top:814.43px;font-size:23px;line-height:23px;color:#000;">W</span>
<span style="left:1999px;top:814.43px;font-size:23px;line-height:23px;color:#000;letter-spacing:-0.273px;">Working</span>
<div style="left:950px;top:850.7px;width:1460px;height:60px;background:#c8c8c8;"></div>
<span style="left:966.3px;top:874.43px;font-size:23px;line-height:23px;color:#000;letter-spacing:0.113px;">004</span>
<span style="left:1290.5px;top:874.43px;font-size:23px;line-height:23px;color:#000;">W</span>
<span style="left:1999px;top:874.43px;font-size:23px;line-height:23px;color:#000;letter-spacing:-0.273px;">Working</span>
<div style="left:950px;top:910.7px;width:1460px;height:60px;background:#cccccc;"></div>
<span style="left:966.3px;top:934.43px;font-size:23px;line-height:23px;color:#000;letter-spacing:0.113px;">005</span>
<span style="left:1290.5px;top:934.43px;font-size:23px;line-height:23px;color:#000;">W</span>
<span style="left:1999px;top:934.43px;font-size:23px;line-height:23px;color:#000;letter-spacing:-0.273px;">Working</span>
<div style="left:950px;top:970.7px;width:1460px;height:60px;background:#c8c8c8;"></div>
<span style="left:966.3px;top:994.43px;font-size:23px;line-height:23px;color:#000;letter-spacing:0.113px;">006</span>
<span style="left:1290.5px;top:994.43px;font-size:23px;line-height:23px;color:#000;">W</span>
<span style="left:1999px;top:994.43px;font-size:23px;line-height:23px;color:#000;letter-spacing:-0.273px;">Working</span>
<div style="left:950px;top:1030.7px;width:1460px;height:60px;background:#cccccc;"></div>
<span style="left:966.3px;top:1054.43px;font-size:23px;line-height:23px;color:#000;letter-spacing:0.113px;">007</span>
<div style="left:950px;top:1121px;width:1460px;height:58.5px;background:#c0c0c0;"></div>
<div style="left:950px;top:1179.5px;width:1460px;height:2px;background:#8b8b8b;"></div>
<span style="left:964.7px;top:1136.71px;font-size:32px;line-height:32px;color:#1a1a1a;letter-spacing:-0.066px;">Shift Breaks for Day 001</span>
<div style="left:2342.5px;top:1121px;width:1.6px;height:58.5px;background:#b3b3b3;"></div>
<span style="left:1996.7px;top:1139.88px;font-size:26px;line-height:26px;color:#000;font-family:'Liberation Mono', monospace;letter-spacing:-0.3px;transform:scaleX(0.9391);transform-origin:0 0;">0 - 0 of 0</span>
<svg style="left:2176px;top:1134.5px;" width="25" height="24.7" viewBox="0 0 34 34"><g transform="rotate(180 17 17)"><path d="M34 17 H5.53 M19.13 2.4 L4.53 17 L19.13 31.6" fill="none" stroke="#b3b3b3" stroke-width="6.4" stroke-linejoin="miter"/></g></svg>
<svg style="left:2263.8px;top:1133.4px;" width="32.7" height="32.7" viewBox="0 0 32.5 32.5"><path d="M2 21 V30.5 H30.5 V21" fill="none" stroke="#aeaeae" stroke-width="3.8"/><path d="M16.2 0 V21 M7.4 12.4 L16.2 21.4 L25 12.4" fill="none" stroke="#aeaeae" stroke-width="3.8"/></svg>
<svg style="left:2368.8px;top:1134.2px;" width="25.6" height="23.6" viewBox="0 0 25.6 23.6"><rect width="25.6" height="23.6" fill="#40639b"/><path d="M11.6 10.6 L5.4 16.8 M4.6 11.4 V17.6 H10.8" fill="none" stroke="#a9b8d0" stroke-width="2.2"/></svg>
<svg style="left:951.9px;top:1187.5px;" width="32.4" height="32.4" viewBox="0 0 32.4 32.4"><circle cx="16.2" cy="16.2" r="14.4" fill="none" stroke="#4a6fa8" stroke-width="2.7"/><rect x="13.2" y="6.6" width="5.4" height="3.6" fill="#4a6fa8"/><path d="M11 14 H18.3 V23.6 M9.8 23.4 H23.2" fill="none" stroke="#4a6fa8" stroke-width="4"/></svg>
<span style="left:994.3px;top:1195.68px;font-size:24px;line-height:24px;color:#2d4f78;letter-spacing:-0.3px;transform:scaleX(0.9485);transform-origin:0 0;">Shift breaks are used only in the Graphical Assignment application.</span>
<div style="left:950px;top:1248px;width:1461px;height:51.8px;background:#c8c8c8;"></div>
<span style="left:1057.3px;top:1263.48px;font-size:24px;line-height:24px;color:#383838;font-weight:700;letter-spacing:0.920px;">Break</span>
<span style="left:1299px;top:1263.48px;font-size:24px;line-height:24px;color:#383838;font-weight:700;">Description</span>
<span style="left:1873.5px;top:1263.48px;font-size:24px;line-height:24px;color:#383838;font-weight:700;letter-spacing:1.507px;">Start Time</span>
<span style="left:2020.3px;top:1263.48px;font-size:24px;line-height:24px;color:#383838;font-weight:700;letter-spacing:1.060px;">End Time</span>
<span style="left:2158px;top:1263.48px;font-size:24px;line-height:24px;color:#383838;font-weight:700;letter-spacing:1.002px;">Work Hours</span>
<svg style="left:975px;top:1310px;" width="420" height="160" viewBox="0 0 420 160"><path d="M8 108.6 C24 130 40 149 61 149 C95 149 120 82.5 207 82.5 C250 82.5 266 100 266 116 C266 128 256 133 244.5 133 C230 133 222.5 124 222.5 112 C222.5 82 253 63.6 272 63.6 C290 63.6 303 74.8 322 74.8 C345 74.8 362 62 371.8 47.5" fill="none" stroke="#9a9a9a" stroke-width="1.3" stroke-dasharray="5.5 5.5"/></svg>
<svg style="left:1330px;top:1314px;" width="60" height="60" viewBox="0 0 60 60"><g fill="#8c8c8c"><path d="M33.20 13.30 L20.28 21.83 A6.5 6.5 0 1 1 18.07 10.05 Z"/><path d="M44.60 25.90 L47.89 42.96 A6.0 6.0 0 1 1 36.66 41.36 Z"/><circle cx="41.07" cy="10.95" r="3.3"/><circle cx="47.50" cy="17.90" r="3.5"/><g transform="translate(31.00 28.50) rotate(47)"><rect x="-8.3" y="-5.75" width="16.6" height="3.2" rx="0.4"/><rect x="-8.3" y="2.55" width="16.6" height="3.2" rx="0.4"/><path d="M-7 -10.45 A8.35 8.35 0 0 1 7 -10.45 Z"/><path d="M-7 10.45 A8.35 8.35 0 0 0 7 10.45 Z"/></g></g></svg>
<span style="left:1431.3px;top:1368.00px;font-size:24px;line-height:24px;color:#555;font-family:'Liberation Serif', serif;letter-spacing:-0.3px;transform:scaleX(0.9435);transform-origin:0 0;">There are no rows to display.</span>
<div style="left:954px;top:1510.2px;width:183.8px;height:57.5px;background:transparent;border:4px solid #40639b;box-sizing:border-box"></div>
<span style="left:978.2px;top:1527.98px;font-size:24px;line-height:24px;color:#40639b;letter-spacing:-0.329px;">Clear Breaks</span>
<div style="left:1152px;top:1510.2px;width:189px;height:57.5px;background:transparent;border:4px solid #40639b;box-sizing:border-box"></div>
<span style="left:1176px;top:1527.98px;font-size:24px;line-height:24px;color:#40639b;letter-spacing:-0.146px;">Apply Breaks</span>
<div style="left:1354px;top:1510.2px;width:148.7px;height:57.5px;background:#40639b;"></div>
<span style="left:1378.8px;top:1527.98px;font-size:24px;line-height:24px;color:#d0d0d0;letter-spacing:-0.3px;transform:scaleX(0.9851);transform-origin:0 0;">New Row</span>
<div style="left:2172px;top:1636px;width:80px;height:57.6px;background:#40639b;"></div>
<span style="left:2196px;top:1654.18px;font-size:24px;line-height:24px;color:#d0d0d0;letter-spacing:-0.3px;transform:scaleX(0.9015);transform-origin:0 0;">OK</span>
<div style="left:2264.8px;top:1636px;width:121.2px;height:57.6px;background:transparent;border:4px solid #40639b;box-sizing:border-box"></div>
<span style="left:2289.3px;top:1654.18px;font-size:24px;line-height:24px;color:#40639b;letter-spacing:-0.404px;">Cancel</span>
<div style="left:1343px;top:653px;width:672px;height:521.6px;background:#fff;box-shadow:0 2px 44px 4px rgba(0,0,0,0.6)"></div>
<span style="left:1358px;top:682.71px;font-size:32px;line-height:32px;color:#222;letter-spacing:-0.075px;">Apply Shifts with Range</span>
<span style="left:1377.7px;top:767.18px;font-size:24px;line-height:24px;color:#111;letter-spacing:-0.3px;transform:scaleX(0.9416);transform-origin:0 0;">Apply Shift To:</span>
<svg style="left:1378.8px;top:808.8px;" width="28.4" height="28.4" viewBox="0 0 28.4 28.4"><rect x="1" y="1" width="26.4" height="26.4" fill="#fff" stroke="#2f6fbe" stroke-width="2"/><circle cx="14.2" cy="14.2" r="13" fill="#4b83ea"/><circle cx="14.2" cy="14.2" r="4.2" fill="#fff"/></svg>
<span style="left:1419.8px;top:811.18px;font-size:24px;line-height:24px;color:#111;letter-spacing:-0.3px;transform:scaleX(0.9270);transform-origin:0 0;">Entire Calendar</span>
<svg style="left:1378.3px;top:866.2px;" width="29.4" height="30" viewBox="0 0 29.4 30"><circle cx="14.7" cy="15.2" r="13.6" fill="#d8d8d8"/><circle cx="14.7" cy="14.4" r="13.4" fill="#fff" stroke="#b9b9b9" stroke-width="1.2"/></svg>
<span style="left:1419.8px;top:868.58px;font-size:24px;line-height:24px;color:#111;letter-spacing:-0.3px;transform:scaleX(0.9215);transform-origin:0 0;">Selected Dates</span>
<span style="left:1387.5px;top:964.03px;font-size:23px;line-height:23px;color:#454545;letter-spacing:-0.3px;transform:scaleX(0.9837);transform-origin:0 0;">StartDate:</span>
<span style="left:1389.3px;top:1003.03px;font-size:23px;line-height:23px;color:#000;letter-spacing:0.809px;">1/1/20</span>
<div style="left:1387px;top:1034.8px;width:160px;height:2.6px;background:#222;"></div>
<svg style="left:1563.4px;top:1002.5px;" width="29" height="27" viewBox="0 0 29 27"><rect x="0" y="3.4" width="29" height="23.6" fill="#5080c4"/><rect x="5.3" y="0" width="3" height="6" fill="#5080c4"/><rect x="20.7" y="0" width="3" height="6" fill="#5080c4"/><rect x="3.0" y="10.4" width="3.8" height="5.6" fill="#fff"/><rect x="3.0" y="18.2" width="3.8" height="5.6" fill="#fff"/><rect x="9.4" y="10.4" width="3.8" height="5.6" fill="#fff"/><rect x="9.4" y="18.2" width="3.8" height="5.6" fill="#fff"/><rect x="15.8" y="10.4" width="3.8" height="5.6" fill="#fff"/><rect x="15.8" y="18.2" width="3.8" height="5.6" fill="#fff"/><rect x="22.2" y="10.4" width="3.8" height="5.6" fill="#fff"/><rect x="22.2" y="18.2" width="3.8" height="5.6" fill="#fff"/></svg>
<span style="left:1708.2px;top:964.03px;font-size:23px;line-height:23px;color:#454545;letter-spacing:-0.3px;transform:scaleX(0.9450);transform-origin:0 0;">End Date:</span>
<span style="left:1710px;top:1003.03px;font-size:23px;line-height:23px;color:#000;letter-spacing:0.738px;">12/31/24</span>
<div style="left:1707.8px;top:1034.8px;width:160px;height:2.6px;background:#222;"></div>
<svg style="left:1884px;top:1002.5px;" width="29" height="27" viewBox="0 0 29 27"><rect x="0" y="3.4" width="29" height="23.6" fill="#5080c4"/><rect x="5.3" y="0" width="3" height="6" fill="#5080c4"/><rect x="20.7" y="0" width="3" height="6" fill="#5080c4"/><rect x="3.0" y="10.4" width="3.8" height="5.6" fill="#fff"/><rect x="3.0" y="18.2" width="3.8" height="5.6" fill="#fff"/><rect x="9.4" y="10.4" width="3.8" height="5.6" fill="#fff"/><rect x="9.4" y="18.2" width="3.8" height="5.6" fill="#fff"/><rect x="15.8" y="10.4" width="3.8" height="5.6" fill="#fff"/><rect x="15.8" y="18.2" width="3.8" height="5.6" fill="#fff"/><rect x="22.2" y="10.4" width="3.8" height="5.6" fill="#fff"/><rect x="22.2" y="18.2" width="3.8" height="5.6" fill="#fff"/></svg>
<div style="left:1746px;top:1093px;width:80.8px;height:57.7px;background:#4c7bc0;"></div>
<span style="left:1770.5px;top:1110.58px;font-size:24px;line-height:24px;color:#fff;letter-spacing:-0.3px;transform:scaleX(0.9015);transform-origin:0 0;">OK</span>
<div style="left:1840px;top:1093px;width:120.6px;height:57.7px;background:transparent;border:4px solid #4c7bc0;box-sizing:border-box"></div>
<span style="left:1864.6px;top:1110.58px;font-size:24px;line-height:24px;color:#4c7bc0;letter-spacing:-0.3px;transform:scaleX(0.9779);transform-origin:0 0;">Cancel</span>
<div style="left:0px;top:1760px;width:3358px;height:66px;background:transparent;background:linear-gradient(180deg,rgba(0,0,0,0) 0%,rgba(0,0,0,0.02) 40%,rgba(0,0,0,0.065) 100%)"></div>
<div style="left:3347px;top:1813px;width:13px;height:13px;background:transparent;background:radial-gradient(circle at 0px 0px, transparent 11.5px, #9a9a9a 12px, #1a2233 13.5px)"></div>
<div style="left:0px;top:1812px;width:14px;height:14px;background:transparent;background:radial-gradient(circle at 14px 0px, transparent 13px, #2a1230 14px)"></div>
</body></html>
